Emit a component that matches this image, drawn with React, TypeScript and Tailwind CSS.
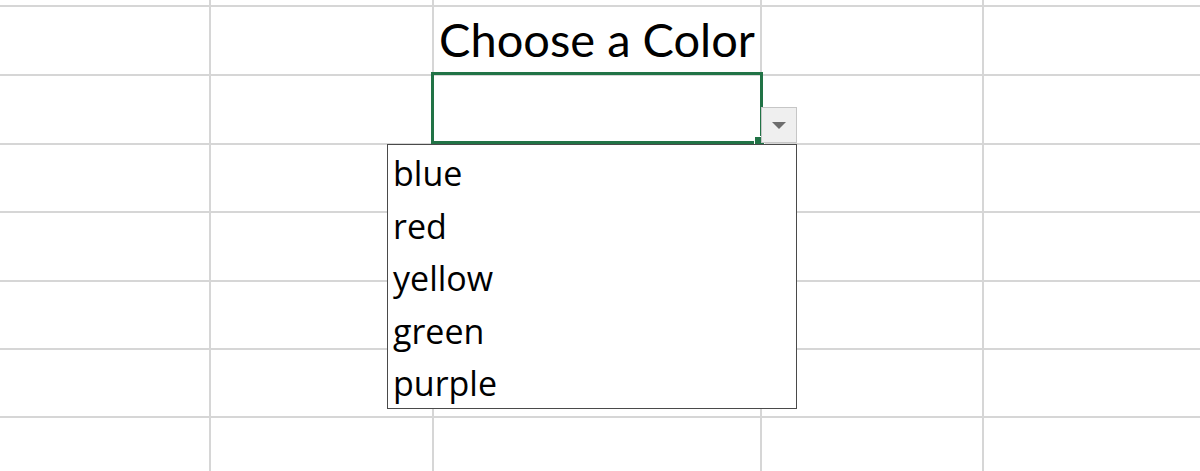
import React from 'react';

const colors = ['blue', 'red', 'yellow', 'green', 'purple'];

// row heights between the 2px grid lines
const rows = ['h5', 'r1', 'r2', 'r3', 'r4', 'r5', 'r6', 'r7'];
const cols = ['A', 'B', 'C', 'D', 'E'];

export default function App() {
  return (
    <div className="relative w-[1200px] h-[471px] overflow-hidden bg-white">
      {/* Sheet grid */}
      <div className="grid h-full grid-cols-[209px_221px_326px_220px_1fr] grid-rows-[5px_67px_67px_66px_67px_66px_66px_1fr] gap-[2px] bg-[#d6d6d6]">
        {rows.map((r, ri) =>
          cols.map((c, ci) => (
            <div key={r + c} className="bg-white">
              {ri === 1 && ci === 2 && (
                <div
                  className="pt-[9px] text-center text-[47px] leading-none text-black"
                  style={{ fontFamily: 'Lato, "Open Sans", sans-serif' }}
                >
                  Choose a Color
                </div>
              )}
            </div>
          ))
        )}
      </div>

      {/* Active cell */}
      <div className="absolute left-[431px] top-[72px] w-[332px] h-[72px] border-[3px] border-[#217346]" />
      <div className="absolute left-[755px] top-[137px] w-[9px] h-[8px] bg-[#217346] outline outline-1 outline-white" />

      {/* Validation dropdown button */}
      <div className="absolute left-[761px] top-[107px] w-[36px] h-[36px] flex items-center justify-center bg-[#efefef] border border-[#c6c6c6]">
        <svg width="14" height="7" viewBox="0 0 14 7">
          <path d="M0 0h14L7 7z" fill="#6d6d6d" />
        </svg>
      </div>

      {/* List */}
      <div
        className="absolute left-[387px] top-[144px] w-[410px] h-[265px] bg-white border border-[#4a4a4a] pt-[2px] pl-[5px] text-[34px] leading-[52.5px] text-black"
        style={{ fontFamily: '"Open Sans", "Noto Sans", sans-serif' }}
      >
        {colors.map((c) => (
          <div key={c}>{c}</div>
        ))}
      </div>
    </div>
  );
}
